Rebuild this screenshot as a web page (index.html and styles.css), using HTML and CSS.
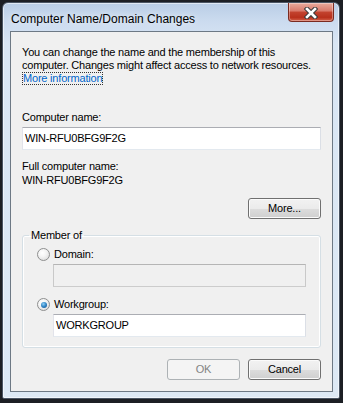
FILE: index.html
```html
<!DOCTYPE html>
<html>
<head>
<meta charset="utf-8">
<link rel="stylesheet" href="styles.css">
</head>
<body>
<div class="window">
  <div class="titlebar">
    <div class="title">Computer Name/Domain Changes</div>
    <div class="close">
      <svg width="14" height="12" viewBox="0 0 14 12">
        <path d="M3 2 L11 10 M11 2 L3 10" stroke="#3b3b3b" stroke-width="4.6" stroke-linecap="square" fill="none"/>
        <path d="M3 2 L11 10 M11 2 L3 10" stroke="#ffffff" stroke-width="2.6" stroke-linecap="square" fill="none"/>
      </svg>
    </div>
  </div>
  <div class="client">
    <div class="intro">You can change the name and the membership of this<br>computer. Changes might affect access to network resources.<br><span class="link">More information</span></div>
    <div class="label first">Computer name:</div>
    <div class="field">WIN-RFU0BFG9F2G</div>
    <div class="label second">Full computer name:</div>
    <div class="value">WIN-RFU0BFG9F2G</div>
    <div class="row more-row"><div class="btn">More...</div></div>
    <fieldset class="group">
      <legend>Member of</legend>
      <div class="radio-row"><span class="radio"></span><span>Domain:</span></div>
      <div class="field sub disabled"></div>
      <div class="radio-row second-radio"><span class="radio checked"></span><span>Workgroup:</span></div>
      <div class="field sub">WORKGROUP</div>
    </fieldset>
    <div class="row actions">
      <div class="btn disabled-btn">OK</div>
      <div class="btn">Cancel</div>
    </div>
  </div>
</div>
</body>
</html>
```

FILE: styles.css
```css
* { box-sizing: border-box; }
html, body { margin: 0; padding: 0; }
body {
  width: 343px;
  height: 403px;
  background: #1c1f24;
  padding: 2px 4px 0 2px;
  font-family: "Liberation Sans", Arial, sans-serif;
  font-size: 11px;
  letter-spacing: -0.2px;
  color: #000;
}
.window {
  width: 338px;
  height: 397px;
  border: 1px solid #4a5564;
  border-radius: 6px 6px 2px 2px;
  background: linear-gradient(to bottom, #b9cde6 0px, #cbdbef 18px, #d9e6f4 40px, #dde9f5 100%);
  box-shadow: inset 0 0 0 1px rgba(255,255,255,0.55);
  padding: 0 5px 0 7px;
  display: flex;
  flex-direction: column;
}
.titlebar {
  height: 28px;
  display: flex;
  justify-content: space-between;
  align-items: flex-start;
}
.title {
  padding: 9px 0 0 1px;
  line-height: 14px;
  font-size: 12px;
  letter-spacing: 0;
  color: #000;
  text-shadow: 0 0 6px rgba(255,255,255,0.9);
}
.close {
  width: 46px;
  height: 19px;
  border: 1px solid #7a2a20;
  border-top: none;
  border-radius: 0 0 4px 4px;
  background: linear-gradient(to bottom, #e8ab9d 0%, #d8796a 45%, #c3432f 50%, #b8301c 80%, #d4614a 100%);
  box-shadow: inset 0 0 0 1px rgba(255,255,255,0.35);
  display: flex;
  align-items: center;
  justify-content: center;
}
.close svg { display: block; margin-top: 1px; }
.client {
  width: 323px;
  height: 361px;
  border: 1px solid #6d7985;
  background: #f0f0f0;
  padding: 0 11px;
  display: flex;
  flex-direction: column;
}
.intro {
  margin-top: 14px;
  line-height: 13px;
  white-space: nowrap;
}
.link {
  display: inline-block;
  color: #0066cc;
  border: 1px dotted #333;
  line-height: 11px;
  height: 13px;
}
.label { line-height: 13px; }
.label.first { margin-top: 26px; }
.label.second { margin-top: 10px; }
.value { line-height: 13px; margin-top: 1px; }
.field {
  height: 23px;
  margin-top: 3px;
  background: #fff;
  border: 1px solid;
  border-color: #abadb3 #dbdfe6 #e3e9ef #e2e3ea;
  padding: 3px 0 0 2px;
  line-height: 15px;
}
.row { display: flex; justify-content: flex-end; gap: 8px; }
.more-row { margin-top: 11px; }
.btn {
  width: 73px;
  height: 21px;
  border: 1px solid #707070;
  border-radius: 3px;
  background: linear-gradient(to bottom, #f2f2f2 0%, #ebebeb 50%, #dddddd 50%, #cfcfcf 100%);
  box-shadow: inset 0 0 0 1px #fbfbfb;
  display: flex;
  align-items: center;
  justify-content: center;
  line-height: 13px;
}
.disabled-btn {
  border-color: #adb2b5;
  background: #f4f4f4;
  color: #838383;
  box-shadow: none;
}
.group {
  margin: 10px 0 0 0;
  padding: 6px 14px 10px 14px;
  border: 1px solid #d5dfe5;
  border-radius: 3px;
  box-shadow: inset 0 0 0 1px #fff;
  min-width: 0;
}
.group legend {
  padding: 0 2px;
  margin-left: -8px;
  line-height: 13px;
}
.radio-row {
  display: flex;
  align-items: center;
  gap: 4px;
  line-height: 13px;
  height: 13px;
}
.second-radio { margin-top: 11px; }
.radio {
  width: 13px;
  height: 13px;
  border-radius: 50%;
  border: 1px solid #8e8f8f;
  background: radial-gradient(circle at 40% 35%, #ffffff 0%, #f4f4f4 40%, #d4d4d4 100%);
  position: relative;
  flex: none;
}
.radio.checked::after {
  content: "";
  position: absolute;
  left: 2.5px;
  top: 2.5px;
  width: 6px;
  height: 6px;
  border-radius: 50%;
  background: radial-gradient(circle at 40% 35%, #8fd0f5 0%, #2f83c4 50%, #1b4f86 100%);
}
.field.sub { margin-left: 16px; margin-top: 3px; }
.field.disabled { background: #f0f0f0; border-color: #b5b5b5 #c9c9c9 #cccccc #c9c9c9; }
.actions { margin-top: 11px; }
```
